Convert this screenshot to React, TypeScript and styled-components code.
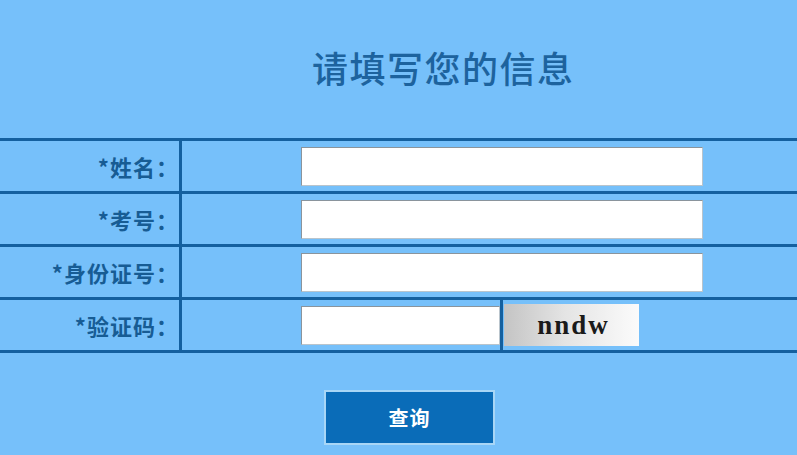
import styled, { createGlobalStyle } from "styled-components";

const GlobalStyle = createGlobalStyle`
  html, body {
    margin: 0;
    padding: 0;
    background: #76c0fa;
  }
  body {
    font-family: "Noto Sans CJK SC", "Noto Sans", sans-serif;
  }
`;

const Page = styled.div`
  width: 797px;
  height: 455px;
  background: #76c0fa;
  overflow: hidden;
`;

const Title = styled.h1`
  margin: 0;
  padding: 43px 0 0 312px;
  height: 138px;
  box-sizing: border-box;
  font-size: 36px;
  font-weight: 500;
  letter-spacing: 1.5px;
  line-height: 48px;
  color: #1d639e;
`;

const Form = styled.div`
  border-top: 3px solid #14609f;
`;

const Row = styled.div`
  display: grid;
  grid-template-columns: 182px 1fr;
  height: 50px;
  border-bottom: 3px solid #14609f;
`;

const Label = styled.div`
  display: flex;
  align-items: center;
  justify-content: flex-end;
  border-right: 3px solid #14609f;
  font-size: 22px;
  font-weight: 700;
  letter-spacing: 1px;
  color: #175c94;
`;

const Field = styled.div`
  display: flex;
  align-items: center;
  padding-left: 119px;
`;

const Input = styled.input<{ $w: number }>`
  width: ${(p) => p.$w}px;
  height: 39px;
  box-sizing: border-box;
  border: 1px solid #b9c4cc;
  border-top-color: #8a949c;
  border-left-color: #8a949c;
  background: #ffffff;
  outline: none;
`;

const CodeCell = styled.div`
  display: flex;
  align-items: center;
  height: 100%;
  border-right: 3px solid #14609f;
`;

const Captcha = styled.div`
  margin-left: 1px;
  width: 135px;
  height: 42px;
  display: flex;
  align-items: center;
  justify-content: center;
  padding-left: 4px;
  box-sizing: border-box;
  background: linear-gradient(90deg, #c4c4c4 0%, #e4e4e4 45%, #fbfbfb 100%);
  font-family: "Liberation Serif", "DejaVu Serif", serif;
  font-size: 27px;
  font-weight: 700;
  color: #1a1a1a;
  letter-spacing: 2px;
`;

const Actions = styled.div`
  display: flex;
  padding: 37px 0 0 324px;
`;

const Button = styled.button`
  width: 171px;
  height: 55px;
  box-sizing: border-box;
  border: 2px solid #a8d6f6;
  background: #0a6cb8;
  color: #ffffff;
  font-family: "Noto Sans CJK SC", sans-serif;
  font-size: 20px;
  font-weight: 700;
  letter-spacing: 1px;
  cursor: pointer;
`;

const fields = [
  { label: "*姓名：" },
  { label: "*考号：" },
  { label: "*身份证号：" },
];

const App = () => {
  return (
    <Page>
      <GlobalStyle />
      <Title>请填写您的信息</Title>
      <Form>
        {fields.map((f) => (
          <Row key={f.label}>
            <Label>{f.label}</Label>
            <Field>
              <Input $w={402} />
            </Field>
          </Row>
        ))}
        <Row>
          <Label>*验证码：</Label>
          <Field>
            <CodeCell>
              <Input $w={199} />
            </CodeCell>
            <Captcha>nndw</Captcha>
          </Field>
        </Row>
      </Form>
      <Actions>
        <Button>查询</Button>
      </Actions>
    </Page>
  );
};

export default App;
